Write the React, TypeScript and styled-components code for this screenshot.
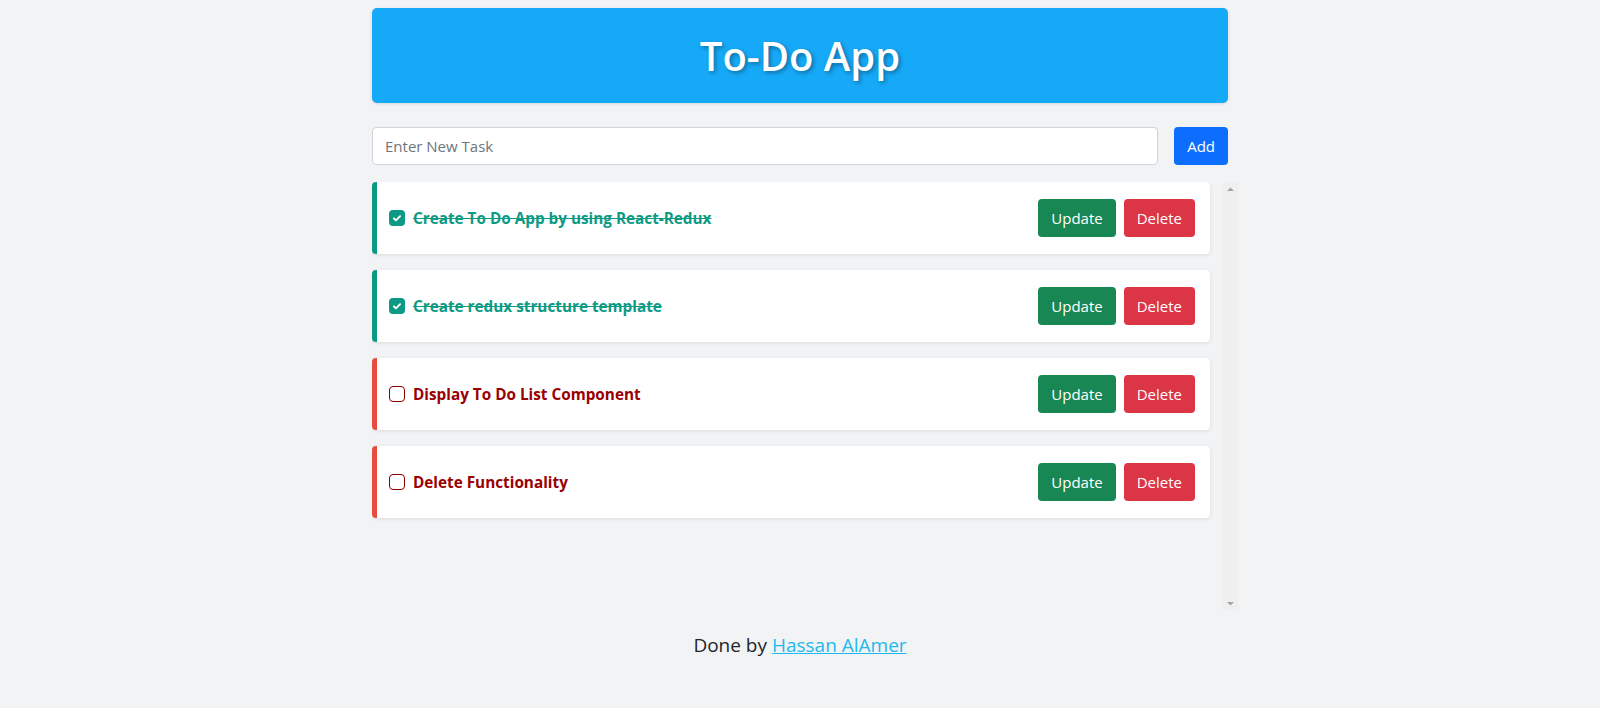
import { FC, useState } from 'react'
import styled, { createGlobalStyle } from 'styled-components'

interface Task {
  id: number
  title: string
  done: boolean
}

const initialTasks: Task[] = [
  { id: 1, title: 'Create To Do App by using React-Redux', done: true },
  { id: 2, title: 'Create redux structure template', done: true },
  { id: 3, title: 'Display To Do List Component', done: false },
  { id: 4, title: 'Delete Functionality', done: false },
]

const App: FC = () => {
  const [tasks, setTasks] = useState<Task[]>(initialTasks)
  const [text, setText] = useState('')

  const toggle = (id: number) =>
    setTasks((prev) => prev.map((t) => (t.id === id ? { ...t, done: !t.done } : t)))

  const remove = (id: number) => setTasks((prev) => prev.filter((t) => t.id !== id))

  const add = () => {
    if (!text.trim()) return
    setTasks((prev) => [...prev, { id: Date.now(), title: text.trim(), done: false }])
    setText('')
  }

  return (
    <>
      <GlobalStyle />
      <Page>
        <Header>
          <Title>To-Do App</Title>
        </Header>

        <AddRow>
          <TaskInput
            placeholder='Enter New Task'
            value={text}
            onChange={(e) => setText(e.target.value)}
          />
          <Button $variant='primary' onClick={add}>
            Add
          </Button>
        </AddRow>

        <ListArea>
          <List>
            {tasks.map((task) => (
              <Card key={task.id} $done={task.done}>
                <Label>
                  <CheckBox $done={task.done} onClick={() => toggle(task.id)}>
                    {task.done && (
                      <svg width='10' height='10' viewBox='0 0 16 16'>
                        <path
                          d='M3 8.5l3.2 3.2L13 5'
                          fill='none'
                          stroke='#fff'
                          strokeWidth='3'
                          strokeLinecap='round'
                          strokeLinejoin='round'
                        />
                      </svg>
                    )}
                  </CheckBox>
                  <TaskText $done={task.done}>{task.title}</TaskText>
                </Label>
                <Actions>
                  <Button $variant='success'>Update</Button>
                  <Button $variant='danger' onClick={() => remove(task.id)}>
                    Delete
                  </Button>
                </Actions>
              </Card>
            ))}
          </List>

          <ScrollTrack>
            <Arrow viewBox='0 0 15 15'>
              <path d='M4 9h7L7.5 5.5z' fill='#a3a3a3' />
            </Arrow>
            <Arrow viewBox='0 0 15 15'>
              <path d='M4 6h7L7.5 9.5z' fill='#a3a3a3' />
            </Arrow>
          </ScrollTrack>
        </ListArea>

        <Footer>
          Done by <FooterLink href='#'>Hassan AlAmer</FooterLink>
        </Footer>
      </Page>
    </>
  )
}

export default App

const GlobalStyle = createGlobalStyle`
  html, body {
    margin: 0;
    background: #f2f3f5;
    font-family: 'Open Sans', 'Noto Sans', sans-serif;
  }
  * {
    box-sizing: border-box;
  }
`

const Page = styled.div`
  width: 856px;
  margin: 0 auto;
  padding-top: 8px;
`

const Header = styled.header`
  height: 95px;
  background: #16a9f8;
  border-radius: 5px;
  box-shadow: 0 1px 3px rgba(0, 0, 0, 0.12);
  display: flex;
  align-items: center;
  justify-content: center;
`

const Title = styled.h1`
  margin: 0;
  color: #fff;
  font-size: 40px;
  font-weight: 600;
  text-shadow: 2px 2px 4px rgba(0, 0, 0, 0.35);
`

const AddRow = styled.div`
  margin-top: 24px;
  display: flex;
  gap: 16px;
`

const TaskInput = styled.input`
  flex: 1;
  height: 38px;
  padding: 0 12px;
  border: 1px solid #ced4da;
  border-radius: 4px;
  background: #fff;
  font-family: inherit;
  font-size: 15px;
  color: #212529;
  outline: none;

  &::placeholder {
    color: #6c757d;
  }
`

const buttonColors = {
  primary: '#0d6efd',
  success: '#198754',
  danger: '#dc3545',
}

const Button = styled.button<{ $variant: keyof typeof buttonColors }>`
  height: 38px;
  padding: 0 13px;
  border: none;
  border-radius: 4px;
  background: ${({ $variant }) => buttonColors[$variant]};
  color: #fff;
  font-family: inherit;
  font-size: 15px;
  cursor: pointer;
`

const ListArea = styled.div`
  width: 866px;
  height: 429px;
  margin-top: 17px;
  display: flex;
`

const List = styled.div`
  flex: 1;
  overflow-y: auto;
  padding-right: 13px;
  display: flex;
  flex-direction: column;
  gap: 16px;
  scrollbar-width: none;
`

const ScrollTrack = styled.div`
  width: 15px;
  flex: 0 0 15px;
  background: #efefef;
  display: flex;
  flex-direction: column;
  justify-content: space-between;
`

const Arrow = styled.svg`
  width: 15px;
  height: 15px;
  display: block;
`

const Card = styled.div<{ $done: boolean }>`
  flex: 0 0 72px;
  display: flex;
  align-items: center;
  justify-content: space-between;
  padding: 0 15px 0 12px;
  background: #fff;
  border-left: 5px solid ${({ $done }) => ($done ? '#0c9a84' : '#e74c3c')};
  border-radius: 4px;
  box-shadow: 0 1px 4px rgba(0, 0, 0, 0.1);
`

const Label = styled.div`
  display: flex;
  align-items: center;
  gap: 8px;
`

const CheckBox = styled.span<{ $done: boolean }>`
  width: 16px;
  height: 16px;
  border-radius: 4px;
  display: flex;
  align-items: center;
  justify-content: center;
  background: ${({ $done }) => ($done ? '#0c9a84' : '#fff')};
  border: ${({ $done }) => ($done ? 'none' : '1.5px solid #8b0000')};
  cursor: pointer;
`

const TaskText = styled.span<{ $done: boolean }>`
  font-size: 15.3px;
  font-weight: 700;
  color: ${({ $done }) => ($done ? '#0c9a84' : '#990000')};
  text-decoration: ${({ $done }) => ($done ? 'line-through' : 'none')};
`

const Actions = styled.div`
  display: flex;
  gap: 8px;
`

const Footer = styled.footer`
  margin-top: 20px;
  text-align: center;
  font-size: 19px;
  line-height: 1.5;
  color: #212529;
`

const FooterLink = styled.a`
  color: #1fb9ee;
  text-decoration: underline;
`
